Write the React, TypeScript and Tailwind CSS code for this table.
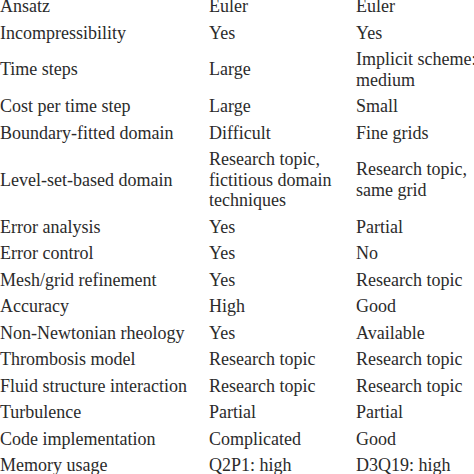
import React from "react";

const rows: [string, string[], string[]][] = [
  ["Ansatz", ["Euler"], ["Euler"]],
  ["Incompressibility", ["Yes"], ["Yes"]],
  ["Time steps", ["Large"], ["Implicit scheme:", "medium"]],
  ["Cost per time step", ["Large"], ["Small"]],
  ["Boundary-fitted domain", ["Difficult"], ["Fine grids"]],
  [
    "Level-set-based domain",
    ["Research topic,", "fictitious domain", "techniques"],
    ["Research topic,", "same grid"],
  ],
  ["Error analysis", ["Yes"], ["Partial"]],
  ["Error control", ["Yes"], ["No"]],
  ["Mesh/grid refinement", ["Yes"], ["Research topic"]],
  ["Accuracy", ["High"], ["Good"]],
  ["Non-Newtonian rheology", ["Yes"], ["Available"]],
  ["Thrombosis model", ["Research topic"], ["Research topic"]],
  ["Fluid structure interaction", ["Research topic"], ["Research topic"]],
  ["Turbulence", ["Partial"], ["Partial"]],
  ["Code implementation", ["Complicated"], ["Good"]],
  ["Memory usage", ["Q2P1: high"], ["D3Q19: high"]],
];

export default function App() {
  return (
    <div className="w-[474px] h-[474px] overflow-hidden bg-white text-[#2b2b2b] font-['Liberation_Serif','DejaVu_Serif',serif]">
      <div className="mt-[-7px] grid grid-cols-[209px_147px_1fr] text-[18px] leading-[20.5px]">
        {rows.map(([a, b, c], i) => (
          <React.Fragment key={i}>
            <div className="flex items-center whitespace-nowrap py-[3px]">{a}</div>
            <div className="flex flex-col justify-center whitespace-nowrap py-[3px]">
              {b.map((t, j) => (
                <span key={j}>{t}</span>
              ))}
            </div>
            <div className="flex flex-col justify-center whitespace-nowrap py-[3px]">
              {c.map((t, j) => (
                <span key={j}>{t}</span>
              ))}
            </div>
          </React.Fragment>
        ))}
      </div>
    </div>
  );
}
